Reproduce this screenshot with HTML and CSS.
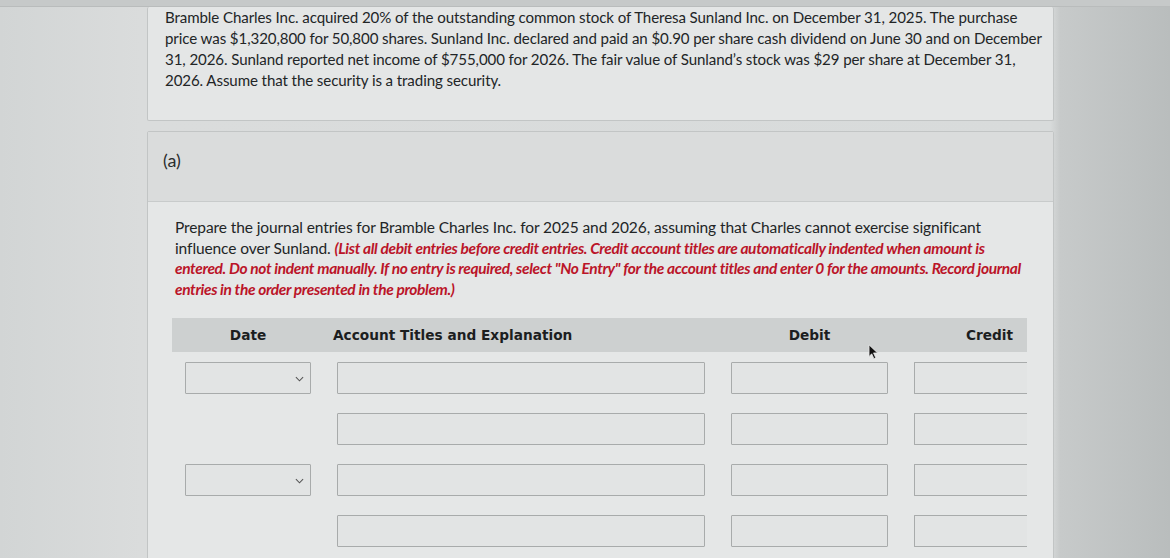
FILE: index.html
```html
<!DOCTYPE html>
<html lang="en">
<head>
<meta charset="utf-8">
<title>Journal entries</title>
<link rel="stylesheet" href="styles.css">
</head>
<body>
<div class="topstrip"></div>
<main class="main">
  <section class="card intro">
    <p class="intro-text">Bramble Charles Inc. acquired 20% of the outstanding common stock of Theresa Sunland Inc. on December 31, 2025. The purchase price was $1,320,800 for 50,800 shares. Sunland Inc. declared and paid an $0.90 per share cash dividend on June 30 and on December 31, 2026. Sunland reported net income of $755,000 for 2026. The fair value of Sunland’s stock was $29 per share at December 31, 2026. Assume that the security is a trading security.</p>
  </section>

  <section class="card part">
    <header class="part-head">(a)</header>
    <div class="part-body">
      <p class="prompt">Prepare the journal entries for Bramble Charles Inc. for 2025 and 2026, assuming that Charles cannot exercise significant influence over Sunland. <em class="note">(List all debit entries before credit entries. Credit account titles are automatically indented when amount is entered. Do not indent manually. If no entry is required, select "No Entry" for the account titles and enter 0 for the amounts. Record journal entries in the order presented in the problem.)</em></p>

      <div class="journal">
        <div class="jhead">
          <div class="h-date">Date</div>
          <div class="h-acct">Account Titles and Explanation</div>
          <div class="h-debit">Debit</div>
          <div class="h-credit">Credit</div>
        </div>
        <div class="jrows">
          <div class="field sel"><svg class="chev" viewBox="0 0 10 6" width="9" height="6"><path d="M1 1 L5 5 L9 1" fill="none" stroke="#555" stroke-width="1.2"/></svg></div>
          <div class="field"></div>
          <div class="field"></div>
          <div class="field credit"></div>

          <div class="empty"></div>
          <div class="field"></div>
          <div class="field"></div>
          <div class="field credit"></div>

          <div class="field sel"><svg class="chev" viewBox="0 0 10 6" width="9" height="6"><path d="M1 1 L5 5 L9 1" fill="none" stroke="#555" stroke-width="1.2"/></svg></div>
          <div class="field"></div>
          <div class="field"></div>
          <div class="field credit"></div>

          <div class="empty"></div>
          <div class="field"></div>
          <div class="field"></div>
          <div class="field credit"></div>
        </div>
        <svg class="cursor" viewBox="0 0 12 18" width="11" height="16"><path d="M1 1 L1 14 L4 11 L6.5 16.5 L8.5 15.5 L6 10 L10.5 10 Z" fill="#111" stroke="#eee" stroke-width="0.8"/></svg>
      </div>
    </div>
  </section>
</main>
</body>
</html>
```

FILE: styles.css
```css
* { box-sizing: border-box; }
html, body { margin: 0; padding: 0; }
body {
  width: 1170px;
  height: 558px;
  overflow: hidden;
  font-family: Lato, "Liberation Sans", sans-serif;
  color: #222526;
  background: linear-gradient(90deg, #d2d5d5 0, #dadcdc 140px, #d8dbdb 1050px, #c7caca 1060px, #b9bdbd 1170px);
}
.topstrip {
  height: 7px;
  background: #c6c9c9;
  border-bottom: 1px solid #b9bcbc;
}
.main {
  margin-left: 147px;
  width: 907px;
}
.card {
  background: #e4e6e6;
  border: 1px solid #c2c5c5;
  border-radius: 2px;
}
.intro {
  border-top: none;
  height: 114px;
  padding: 0 8px 0 17px;
}
.intro-text {
  margin: 0;
  font-size: 15.1px;
  line-height: 21px;
  letter-spacing: -0.1px;
}
.part {
  margin-top: 10px;
  height: 440px;
  overflow: hidden;
}
.part-head {
  height: 70px;
  background: #dadcdc;
  border-bottom: 1px solid #c8cbcb;
  padding: 16px 0 0 15px;
  font-size: 18px;
  line-height: 24px;
  color: #2a2d2e;
}
.part-body {
  background: #e5e7e7;
  padding: 15px 0 0 27px;
  height: 370px;
}
.prompt {
  margin: 0;
  width: 852px;
  font-size: 15.5px;
  line-height: 20.5px;
  letter-spacing: -0.1px;
}
.note {
  color: #bb1529;
  font-weight: 700;
  font-style: italic;
  letter-spacing: -0.36px;
}
.journal {
  position: relative;
  margin-top: 19px;
  margin-left: -3px;
  width: 855px;
  overflow: hidden;
}
.jhead {
  height: 34px;
  background: #cdd0d0;
  display: grid;
  grid-template-columns: 126px 368px 157px 1fr;
  column-gap: 26px;
  padding-left: 13px;
  align-items: center;
  font-family: "DejaVu Sans", Verdana, sans-serif;
  font-weight: 700;
  font-size: 13.7px;
  color: #1c1e1f;
}
.h-date { text-align: center; }
.h-acct { margin-left: -4px; }
.h-debit { text-align: center; }
.h-credit { text-align: right; padding-right: 14px; }
.jrows {
  margin-top: 10px;
  display: grid;
  grid-template-columns: 126px 368px 157px 140px;
  column-gap: 26px;
  row-gap: 19px;
  padding-left: 13px;
}
.field {
  height: 32px;
  border: 1px solid #a8abab;
  border-radius: 1px;
  background: #e2e4e4;
}
.sel {
  position: relative;
}
.chev {
  position: absolute;
  right: 6px;
  top: 13px;
}
.credit {
  border-right: none;
}
.cursor {
  position: absolute;
  left: 696px;
  top: 26px;
}
```
